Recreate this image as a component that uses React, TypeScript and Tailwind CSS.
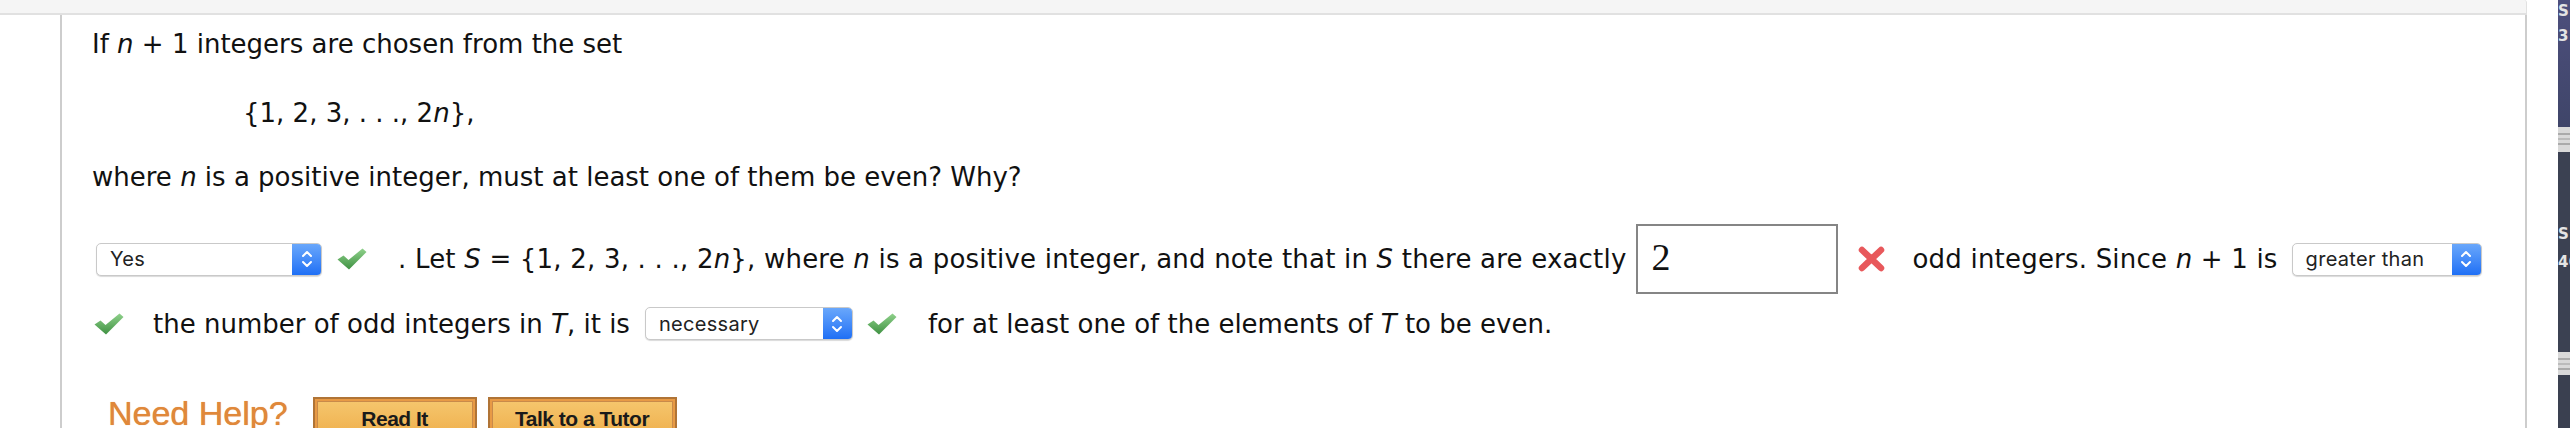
import React from "react";

const Chevrons = () => (
  <svg width="12" height="20" viewBox="0 0 12 20" fill="none">
    <path d="M2 7 L6 3 L10 7" stroke="white" strokeWidth="2" strokeLinecap="round" strokeLinejoin="round" />
    <path d="M2 13 L6 17 L10 13" stroke="white" strokeWidth="2" strokeLinecap="round" strokeLinejoin="round" />
  </svg>
);

const Select = ({ value, width }: { value: string; width: string }) => (
  <div
    className={`${width} h-[33px] flex rounded-[5px] border border-[#c9c9c9] bg-white shadow-[0_1px_1px_rgba(0,0,0,0.15)] overflow-hidden shrink-0`}
  >
    <div className="flex-1 flex items-center pl-[13px] text-[20px] tracking-[0.3px] text-[#222] font-['Inter',sans-serif]">
      {value}
    </div>
    <div className="w-[29px] flex items-center justify-center bg-gradient-to-b from-[#69a7fb] to-[#1e6ff5]">
      <Chevrons />
    </div>
  </div>
);

const Check = () => (
  <svg width="32" height="24" viewBox="0 0 32 24" className="shrink-0">
    <defs>
      <linearGradient id="chk" x1="0" y1="0" x2="0" y2="1">
        <stop offset="0" stopColor="#8fd18b" />
        <stop offset="1" stopColor="#3f9142" />
      </linearGradient>
    </defs>
    <path d="M1.5 12.5 L7.5 8.5 L12.5 13 L26.5 1.5 L30.5 5 L13 22.5 Z" fill="url(#chk)" />
  </svg>
);

const Cross = () => (
  <svg width="29" height="26" viewBox="0 0 29 26" className="shrink-0">
    <path d="M5 4 L24 22 M24 4 L5 22" stroke="#e8585b" strokeWidth="6.5" strokeLinecap="round" />
  </svg>
);

const HelpButton = ({ label, width }: { label: string; width: string }) => (
  <div className={`${width} h-[40px] border-2 border-[#b07436] bg-[#e89a45] p-[2px] shrink-0`}>
    <div className="h-full border border-[#c98a4a] bg-gradient-to-b from-[#f5c56c] to-[#f0b24f] flex items-start justify-center pt-[6px] text-[21px] font-bold leading-none text-[#1a1a1a] font-['Liberation_Sans',Arial,sans-serif] tracking-[-0.5px]">
      {label}
    </div>
  </div>
);

export default function App() {
  return (
    <div className="w-[2570px] h-[428px] bg-white flex overflow-hidden font-['DejaVu_Sans',Verdana,sans-serif] text-[26px] leading-[30px] text-[#111]">
      <div className="w-[2527px] flex flex-col shrink-0">
        <div className="h-[15px] shrink-0 bg-[#f5f5f5] border-b-2 border-r border-[#e1e1e1] rounded-tr-[3px]" />
        <div className="flex flex-1 min-h-0">
          <div className="w-[60px] shrink-0" />
          <div className="flex-1 border-l-2 border-r-2 border-[#cdcdcd] pl-[30px] pt-[14px] flex flex-col">
            <div>
              If <i>n</i> + 1 integers are chosen from the set
            </div>
            <div className="mt-[39px] pl-[151px]">
              {"{"}1, 2, 3, . . ., 2<i>n</i>{"}"},
            </div>
            <div className="mt-[34px]">
              where <i>n</i> is a positive integer, must at least one of them be even? Why?
            </div>

            <div className="mt-[32px] h-[70px] shrink-0 flex items-center whitespace-nowrap">
              <div className="ml-[4px]">
                <Select value="Yes" width="w-[226px]" />
              </div>
              <div className="ml-[14px]">
                <Check />
              </div>
              <span className="ml-[30px] tracking-[0.2px]">
                . Let <i>S</i> = {"{"}1, 2, 3, . . ., 2<i>n</i>{"}"}, where <i>n</i> is a positive integer, and note that in <i>S</i> there are exactly
              </span>
              <div className="ml-[9px] w-[202px] h-[70px] border-2 border-[#858585] flex items-center pl-[14px] pb-[4px] text-[38px] font-['Liberation_Serif',serif] text-[#111] shrink-0">
                2
              </div>
              <div className="ml-[19px]">
                <Cross />
              </div>
              <span className="ml-[27px] tracking-[0.2px]">
                odd integers. Since <i>n</i> + 1 is
              </span>
              <div className="ml-[14px]">
                <Select value="greater than" width="w-[190px]" />
              </div>
            </div>

            <div className="mt-[13px] h-[33px] shrink-0 flex items-center whitespace-nowrap">
              <div className="ml-[1px]">
                <Check />
              </div>
              <span className="ml-[28px]">
                the number of odd integers in <i>T</i>, it is
              </span>
              <div className="ml-[15px]">
                <Select value="necessary" width="w-[208px]" />
              </div>
              <div className="ml-[13px]">
                <Check />
              </div>
              <span className="ml-[30px]">
                for at least one of the elements of <i>T</i> to be even.
              </span>
            </div>

            <div className="mt-[56px] shrink-0 flex items-start">
              <div className="ml-[16px] text-[34px] leading-[34px] text-[#e0883a] font-['Liberation_Sans',Arial,sans-serif] [text-shadow:0_0_0.7px_#e0883a]">
                Need Help?
              </div>
              <div className="ml-[25px] mt-[1px]">
                <HelpButton label="Read It" width="w-[164px]" />
              </div>
              <div className="ml-[11px] mt-[1px]">
                <HelpButton label="Talk to a Tutor" width="w-[189px]" />
              </div>
            </div>
          </div>
        </div>
      </div>
      <div className="w-[31px] shrink-0" />
      <div className="w-[12px] shrink-0 flex flex-col overflow-hidden font-['DejaVu_Sans',sans-serif] text-[15px] leading-[22px] font-bold text-[#e4e4e4]">
        <div className="h-[127px] shrink-0 bg-gradient-to-b from-[#4d4f7d] to-[#3f4569]">
          <div>S</div>
          <div className="mt-[3px]">3</div>
        </div>
        <div className="h-[25px] shrink-0 bg-[#d9d9d9] flex flex-col gap-[3px] pt-[6px]">
          <div className="h-[2px] bg-[#aaaaaa]" />
          <div className="h-[2px] bg-[#bbbbbb]" />
          <div className="h-[2px] bg-[#aaaaaa]" />
        </div>
        <div className="h-[200px] shrink-0 bg-[#3b4152] pt-[71px]">
          <div>S</div>
          <div className="mt-[6px]">46</div>
        </div>
        <div className="h-[23px] shrink-0 bg-[#d9d9d9] flex flex-col gap-[3px] pt-[6px]">
          <div className="h-[2px] bg-[#aaaaaa]" />
          <div className="h-[2px] bg-[#bbbbbb]" />
          <div className="h-[2px] bg-[#aaaaaa]" />
        </div>
        <div className="flex-1 bg-[#3a4050]" />
      </div>
    </div>
  );
}
